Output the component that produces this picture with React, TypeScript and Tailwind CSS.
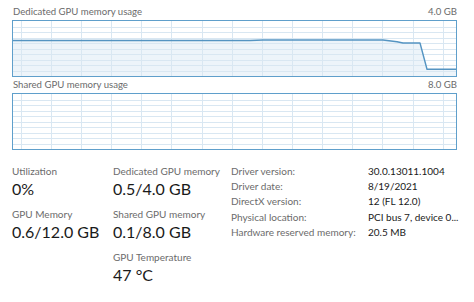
import React from "react";

const W = 443;
const H = 55;

function Grid() {
  const v: number[] = [];
  for (let x = 7.7; x < W; x += 30.14) v.push(x);
  const h: number[] = [];
  for (let i = 1; i < 10; i++) h.push(i * 5.55);
  return (
    <g stroke="#d9e7f2" strokeWidth={1} shapeRendering="crispEdges">
      {v.map((x) => (
        <line key={"v" + x} x1={Math.round(x) + 0.5} y1={0} x2={Math.round(x) + 0.5} y2={H} />
      ))}
      {h.map((y) => (
        <line key={"h" + y} x1={0} y1={Math.round(y) + 0.5} x2={W} y2={Math.round(y) + 0.5} />
      ))}
    </g>
  );
}

function Chart({ line }: { line?: boolean }) {
  const pts = "0,19.5 237,19.5 250,19 370,19 384,20.7 390,22 407,22 414,48.3 444,48.3";
  return (
    <div className="w-[445px] h-[57px] border border-[#5f9fcb] bg-white">
      <svg width={W} height={H} viewBox={`0 0 ${W} ${H}`} className="block">
        {line && <polygon points={`${pts} 444,55 0,55`} fill="#edf4fa" />}
        <Grid />
        {line && <polyline points={pts} fill="none" stroke="#5494c2" strokeWidth={1.4} strokeLinejoin="round" />}
      </svg>
    </div>
  );
}

function Stat({ label, value }: { label: string; value: string }) {
  return (
    <div className="flex flex-col h-[43px]">
      <div className="text-[10px] leading-[14px] text-[#6b6b6b] whitespace-nowrap">{label}</div>
      <div className="text-[16px] leading-[22px] text-[#1a1a1a] whitespace-nowrap">{value}</div>
    </div>
  );
}

export default function App() {
  const info: [string, string][] = [
    ["Driver version:", "30.0.13011.1004"],
    ["Driver date:", "8/19/2021"],
    ["DirectX version:", "12 (FL 12.0)"],
    ["Physical location:", "PCI bus 7, device 0..."],
    ["Hardware reserved memory:", "20.5 MB"],
  ];
  return (
    <div className="w-[474px] h-[302px] bg-white overflow-hidden pl-[12px] font-['Lato',sans-serif]">
      <div className="w-[445px]">
        <div className="flex justify-between items-end h-[20px] pb-[1px] text-[9.6px] leading-[14px] text-[#6b6b6b]">
          <span className="pl-[1px]">Dedicated GPU memory usage</span>
          <span>4.0 GB</span>
        </div>
        <Chart line />
        <div className="flex justify-between items-end h-[16px] pb-[1px] text-[9.6px] leading-[14px] text-[#6b6b6b]">
          <span className="pl-[1px]">Shared GPU memory usage</span>
          <span>8.0 GB</span>
        </div>
        <Chart />
      </div>
      <div className="flex items-start mt-[14px]">
        <div className="w-[101px] flex flex-col">
          <Stat label="Utilization" value="0%" />
          <Stat label="GPU Memory" value="0.6/12.0 GB" />
        </div>
        <div className="w-[118px] flex flex-col">
          <Stat label="Dedicated GPU memory" value="0.5/4.0 GB" />
          <Stat label="Shared GPU memory" value="0.1/8.0 GB" />
          <Stat label="GPU Temperature" value="47 °C" />
        </div>
        <div className="grid grid-cols-[137px_auto] content-start text-[10px] leading-[15.2px]">
          {info.map(([k, v]) => (
            <React.Fragment key={k}>
              <div className="text-[#6b6b6b] whitespace-nowrap">{k}</div>
              <div className="text-[#1a1a1a] whitespace-nowrap">{v}</div>
            </React.Fragment>
          ))}
        </div>
      </div>
    </div>
  );
}
